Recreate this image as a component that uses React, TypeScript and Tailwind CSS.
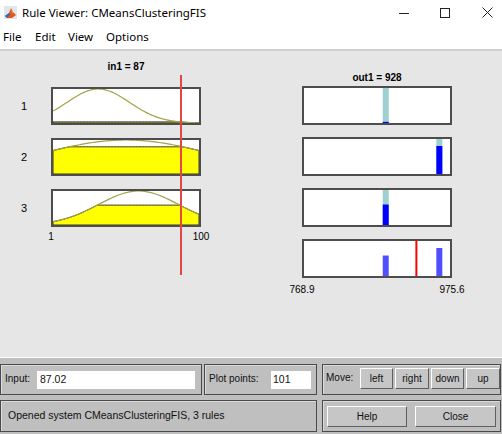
import React from 'react';

const gauss = (x: number, c: number, s: number) => Math.exp(-((x - c) ** 2) / (2 * s * s));

interface MfProps {
  c: number;
  s: number;
  fire: number;
}

// membership function plot, domain 1..100
const MfPlot: React.FC<MfProps> = ({ c, s, fire }) => {
  const W = 146;
  const H = 34;
  const curve: string[] = [];
  const fill: string[] = [];
  for (let i = 0; i <= 99; i++) {
    const v = gauss(1 + i, c, s);
    const px = (i / 99) * W;
    curve.push(`${px.toFixed(2)},${(H - v * H).toFixed(2)}`);
    fill.push(`${px.toFixed(2)},${(H - Math.min(v, fire) * H).toFixed(2)}`);
  }
  fill.push(`${W},${H}`, `0,${H}`);
  return (
    <div className="w-[150px] h-[38px] border-2 border-[#4d4d4d] bg-white">
      <svg width={W} height={H} viewBox={`0 0 ${W} ${H}`} className="block">
        <polygon points={fill.join(' ')} fill="#ffff00" stroke="#333" strokeWidth="1" />
        <polyline points={curve.join(' ')} fill="none" stroke="#a3a146" strokeWidth="1.2" />
      </svg>
    </div>
  );
};

interface OutProps {
  bars: { x: number; teal: boolean; h: number }[];
  red?: number;
  light?: boolean;
}

const lo = 768.9;
const hi = 975.6;

const OutPlot: React.FC<OutProps> = ({ bars, red, light }) => {
  const W = 146;
  const H = 35;
  const toX = (v: number) => ((v - lo) / (hi - lo)) * W;
  return (
    <div className="w-[150px] h-[39px] border-2 border-[#4d4d4d] bg-white">
      <svg width={W} height={H} viewBox={`0 0 ${W} ${H}`} className="block">
        {bars.map((b, i) => (
          <g key={i}>
            {b.teal && <rect x={toX(b.x) - 3} y={0} width={6} height={H} fill="#9dd1d1" />}
            <rect
              x={toX(b.x) - 3}
              y={H - b.h * H}
              width={6}
              height={b.h * H}
              fill={light ? '#4f4fff' : '#0000ff'}
            />
          </g>
        ))}
        {red !== undefined && <rect x={toX(red) - 1} y={0} width={2} height={H} fill="#ff0000" />}
      </svg>
    </div>
  );
};

const Btn: React.FC<{ label: string; w: string }> = ({ label, w }) => (
  <div
    className={`${w} h-[21px] flex items-center justify-center bg-[#c6c6c6] border border-t-white border-l-white border-r-[#5e5e5e] border-b-[#5e5e5e] text-[10px] text-[#111]`}
  >
    {label}
  </div>
);

const rules = [
  { c: 31.7, s: 21.2, fire: 0.033 },
  { c: 50.5, s: 57.5, fire: 0.8 },
  { c: 59, s: 27, fire: 0.585 },
];

export default function App() {
  return (
    <div className="w-[502px] h-[434px] flex flex-col bg-white overflow-hidden font-['Liberation_Sans',Arial,sans-serif]">
      {/* title bar */}
      <div className="h-[25px] flex items-center bg-white font-['Noto_Sans',sans-serif] text-[11.5px] text-black">
        <svg width="13" height="13" viewBox="0 0 13 13" className="ml-[4px] mr-[5px]">
          <rect x="0" y="0" width="13" height="13" fill="#dfe6ef" />
          <polygon points="1,10 5,7 7,2 9,6 12,9 8,12 3,12" fill="#e3561a" />
          <polygon points="1,10 5,7 6,9 3,12" fill="#2f6db3" />
          <polygon points="7,2 9,6 8,8" fill="#f7a41d" />
        </svg>
        <span>Rule Viewer: CMeansClusteringFIS</span>
        <div className="ml-auto flex items-center pr-[9px]">
          <svg width="10" height="10" viewBox="0 0 10 10" className="mr-[31px]">
            <line x1="0" y1="5.5" x2="10" y2="5.5" stroke="#222" strokeWidth="1" />
          </svg>
          <svg width="10" height="10" viewBox="0 0 10 10" className="mr-[32px]">
            <rect x="0.5" y="0.5" width="9" height="9" fill="none" stroke="#222" strokeWidth="1" />
          </svg>
          <svg width="11" height="11" viewBox="0 0 11 11">
            <path d="M0.5 0.5 L10.5 10.5 M10.5 0.5 L0.5 10.5" stroke="#222" strokeWidth="1" />
          </svg>
        </div>
      </div>

      {/* menu bar */}
      <div className="h-[24px] flex items-center bg-white font-['Noto_Sans',sans-serif] text-[11.5px] text-black">
        <span className="w-[35px] pl-[3px]">File</span>
        <span className="w-[33px]">Edit</span>
        <span className="w-[38px]">View</span>
        <span>Options</span>
      </div>
      <div className="h-[2px] bg-[#cfcfcf]" />

      {/* plot area */}
      <div className="relative h-[306px] bg-[#e6e6e6] flex text-black">
        <div className="w-[201px] shrink-0 flex flex-col pt-[10px]">
          <div className="ml-[51px] w-[150px] h-[12px] leading-[12px] text-center text-[10px] font-bold">in1 = 87</div>
          <div className="mt-[14px] flex flex-col gap-[13px]">
            {rules.map((r, i) => (
              <div key={i} className="flex items-center">
                <span className="w-[48px] text-center text-[11px]">{i + 1}</span>
                <div className="ml-[3px]">
                  <MfPlot c={r.c} s={r.s} fire={r.fire} />
                </div>
              </div>
            ))}
          </div>
          <div className="ml-[36px] w-[180px] mt-[4px] flex justify-between text-[10px] leading-[12px]">
            <span className="w-[30px] text-center">1</span>
            <span className="w-[30px] text-center">100</span>
          </div>
        </div>

        <div className="ml-[101px] w-[150px] shrink-0 flex flex-col pt-[21px]">
          <div className="w-[150px] h-[12px] leading-[12px] text-center text-[10px] font-bold">out1 = 928</div>
          <div className="mt-[2px] flex flex-col gap-[12px]">
            <OutPlot bars={[{ x: 884.6, teal: true, h: 0.033 }]} />
            <OutPlot bars={[{ x: 960.5, teal: true, h: 0.8 }]} />
            <OutPlot bars={[{ x: 884.6, teal: true, h: 0.585 }]} />
            <OutPlot
              light
              red={928}
              bars={[
                { x: 884.6, teal: false, h: 0.585 },
                { x: 960.5, teal: false, h: 0.8 },
              ]}
            />
          </div>
          <div className="-ml-[15px] w-[180px] mt-[6px] flex justify-between text-[10px] leading-[12px]">
            <span className="w-[30px] text-center">768.9</span>
            <span className="w-[30px] text-center">975.6</span>
          </div>
        </div>

        {/* input value cursor over the left plots */}
        <div className="absolute left-[180px] top-[24px] w-[2px] h-[200px] bg-[#e64545]" />
      </div>

      {/* controls */}
      <div className="flex-1 bg-[#bfbfbf] border-t border-white pt-[6px] text-[10px] text-[#111]">
        <div className="flex h-[31px]">
          <div className="w-[202px] border border-[#4a4a4a] shadow-[inset_1px_1px_0_#dcdcdc] flex items-start pt-[6px] pl-[4px]">
            <span className="w-[32px]">Input:</span>
            <div className="w-[158px] h-[18px] bg-white flex items-center pl-[3px] text-[10.5px]">87.02</div>
          </div>
          <div className="ml-[2px] w-[113px] border border-[#4a4a4a] shadow-[inset_1px_1px_0_#dcdcdc] flex items-start pt-[6px] pl-[4px]">
            <span className="w-[62px]">Plot points:</span>
            <div className="w-[40px] h-[18px] bg-white flex items-center pl-[2px] text-[10.5px]">101</div>
          </div>
          <div className="ml-[5px] w-[179px] border border-[#4a4a4a] shadow-[inset_1px_1px_0_#dcdcdc] flex items-start pt-[3px] pl-[3px]">
            <span className="w-[36px] pt-[2px]">Move:</span>
            <div className="flex gap-[2px]">
              <Btn label="left" w="w-[33px]" />
              <Btn label="right" w="w-[34px]" />
              <Btn label="down" w="w-[33px]" />
              <Btn label="up" w="w-[34px]" />
            </div>
          </div>
        </div>
        <div className="flex h-[32px] mt-[5px]">
          <div className="w-[317px] border border-[#4a4a4a] shadow-[inset_1px_1px_0_#dcdcdc] flex items-center pl-[7px] text-[10.5px]">
            Opened system CMeansClusteringFIS, 3 rules
          </div>
          <div className="ml-[5px] w-[179px] border border-[#4a4a4a] shadow-[inset_1px_1px_0_#dcdcdc] flex items-center pl-[4px] gap-[8px]">
            <Btn label="Help" w="w-[80px]" />
            <Btn label="Close" w="w-[81px]" />
          </div>
        </div>
      </div>
    </div>
  );
}
